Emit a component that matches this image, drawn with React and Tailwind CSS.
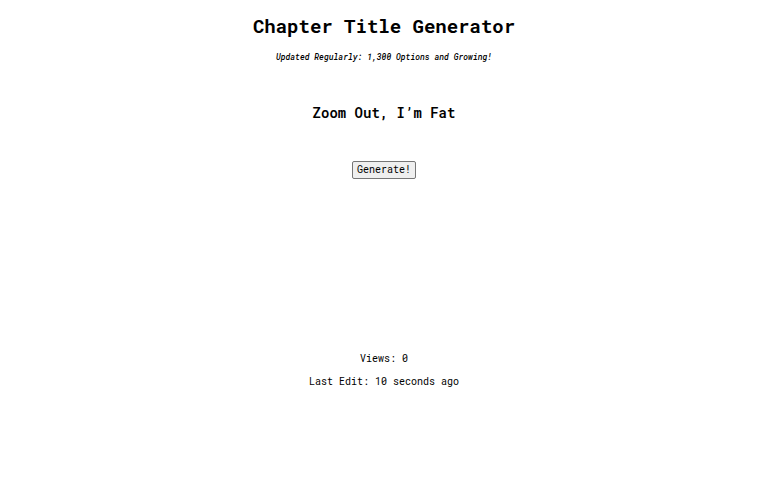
import { useState } from 'react';

const titles = [
    "Zoom Out, I\u2019m Fat",
    "The One Where Nothing Happens",
    "Previously, On This Nonsense",
    "A Very Long Tuesday",
];

const App = () => {
    const [index, setIndex] = useState(0);

    const handleGenerate = () => {
        setIndex((index + 1) % titles.length);
    };

    return (
        <div className="min-h-screen bg-white text-black flex flex-col items-center" style={{ fontFamily: '"Roboto Mono", "DejaVu Sans Mono", monospace' }}>
            <h1 className="mt-[12px] text-[19px] leading-[28px] font-bold">Chapter Title Generator</h1>
            <p className="mt-[12px] text-[8.2px] leading-[10px] font-medium italic">Updated Regularly: 1,300 Options and Growing!</p>

            <h2 className="mt-[41px] text-[14px] leading-[20px] font-semibold">{titles[index]}</h2>

            <button
                onClick={handleGenerate}
                className="mt-[38px] px-[4px] h-[18px] text-[10px] leading-[14px] bg-[#efefef] border border-[#767676] rounded-[2px]"
            >
                Generate!
            </button>

            <div className="mt-[173px] flex flex-col items-center gap-[9px] text-[10px] leading-[14px]">
                <span>Views: 0</span>
                <span>Last Edit: 10 seconds ago</span>
            </div>
        </div>
    );
};

export default App;
